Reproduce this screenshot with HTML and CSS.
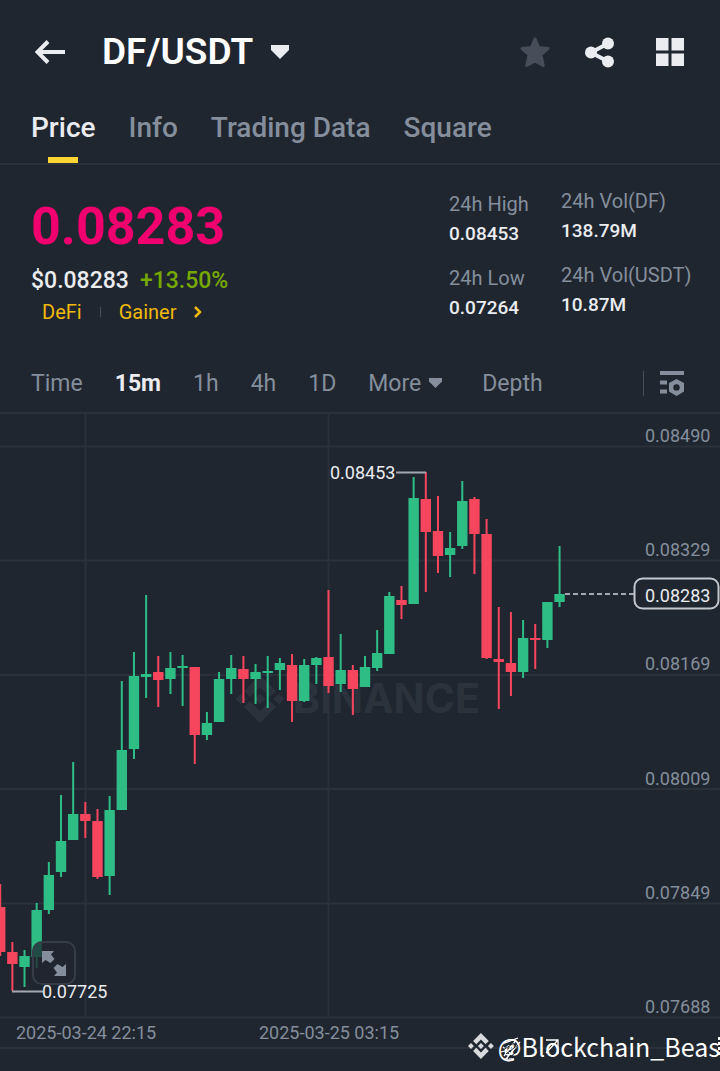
FILE: index.html
```
<!DOCTYPE html>
<html lang="en">

<head>
    <meta charset="UTF-8">
    <meta name="viewport" content="width=device-width, initial-scale=1.0">
    <title>DF/USDT</title>
    <link rel="stylesheet" href="styles.css">
</head>

<body>
    <header class="topbar">
        <button class="icon-btn" aria-label="Back">
            <svg width="30" height="24" viewBox="0 0 30 24"><path d="M13 1.5L2.5 12L13 22.5M3 12H30" fill="none" stroke="#eaecef" stroke-width="4"/></svg>
        </button>
        <button class="pair">
            DF/USDT
            <svg width="18" height="14" viewBox="0 0 18 14"><path d="M0 0H18V5L9 14L0 5Z" fill="#eaecef"/></svg>
        </button>
        <div class="actions">
            <button class="icon-btn" aria-label="Favorite">
                <svg width="30" height="31" viewBox="0 0 30 31"><path d="M15 2L18.7 10.6L28 11.5L21 17.8L23.2 28.5L15 24L6.8 28.5L9 17.8L2 11.5L11.3 10.6Z" fill="#474d59" stroke="#474d59" stroke-width="3" stroke-linejoin="round"/></svg>
            </button>
            <button class="icon-btn" aria-label="Share">
                <svg width="30" height="31" viewBox="0 0 30 31"><path d="M23 6.5L6 15.5L23 24.5" fill="none" stroke="#eaecef" stroke-width="4"/><g fill="#eaecef"><circle cx="23" cy="6.5" r="6"/><circle cx="6" cy="15.5" r="6"/><circle cx="23" cy="24.5" r="6"/></g></svg>
            </button>
            <button class="icon-btn" aria-label="Menu">
                <svg width="34" height="28" viewBox="-6 0 34 28"><path d="M0 0H12.5V12.5H0ZM15.5 0H28V12.5H15.5ZM0 15.5H12.5V28H0ZM15.5 15.5H28V28H15.5Z" fill="#eaecef"/></svg>
            </button>
        </div>
    </header>

    <nav class="tabs">
        <a class="tab active" href="#">Price</a>
        <a class="tab" href="#">Info</a>
        <a class="tab" href="#">Trading Data</a>
        <a class="tab" href="#">Square</a>
    </nav>

    <section class="summary">
        <div class="quote">
            <div class="last-price">0.08283</div>
            <div class="fiat"><span>$0.08283</span><span class="change">+13.50%</span></div>
            <div class="tags">
                <a href="#">DeFi</a>
                <i class="tag-line"></i>
                <a href="#">Gainer
                    <svg width="8" height="12" viewBox="0 0 8 12"><path d="M1 1L6 6L1 11" fill="none" stroke="#f0b90b" stroke-width="2.5"/></svg>
                </a>
            </div>
        </div>
        <dl class="stats">
            <dt>24h High</dt>
            <dd>0.08453</dd>
            <dt>24h Low</dt>
            <dd>0.07264</dd>
        </dl>
        <dl class="stats volume">
            <dt>24h Vol(DF)</dt>
            <dd>138.79M</dd>
            <dt>24h Vol(USDT)</dt>
            <dd>10.87M</dd>
        </dl>
    </section>

    <div class="intervals">
        <button>Time</button>
        <button class="active">15m</button>
        <button>1h</button>
        <button>4h</button>
        <button>1D</button>
        <button class="more">More <svg width="13" height="10" viewBox="0 0 13 10"><path d="M0 0H13V3.5L6.5 10L0 3.5Z" fill="#848e9c"/></svg></button>
        <button>Depth</button>
        <button class="settings" aria-label="Chart settings">
            <svg width="24" height="25" viewBox="0 0 24 25"><path d="M0 0H24V4H0ZM0 9.5H7V13.5H0ZM0 18.5H7V22.5H0Z" fill="#848e9c"/><path fill-rule="evenodd" d="M16.5 8L24 12V20.5L16.5 25L9 20.5V12ZM16.5 13.2A3.2 3.2 0 1 0 16.5 19.6A3.2 3.2 0 1 0 16.5 13.2Z" fill="#848e9c"/></svg>
        </button>
    </div>

    <main class="chart">
        <svg class="plot" viewBox="0 0 720 659">
            <path class="grid" d="M0 34.5H720M0 148.5H720M0 263H720M0 377H720M0 491.5H720M0 605.5H720M0 636H720M85.5 0V605M328.5 0V605"/>

            <!-- watermark -->
            <g class="mark">
                <path d="M260 263L276 279L270 285L260 275L250 285L244 279ZM260 311L276 295L270 289L260 299L250 289L244 295ZM260 281.5L265.5 287L260 292.5L254.5 287ZM241 281.5L246.5 287L241 292.5L235.5 287ZM279 281.5L284.5 287L279 292.5L273.5 287Z"/>
                <text x="293" y="301">BINANCE</text>
            </g>

            <g id="candles"></g>

            <path class="leader" d="M396 60.5H426M12 579.5H43"/>
            <path class="leader" stroke-dasharray="5 3" d="M565 182H634"/>
            <rect class="price-tag" x="634.5" y="166.5" width="84" height="30" rx="8"/>

            <g class="axis">
                <text x="645" y="30">0.08490</text>
                <text x="645" y="144">0.08329</text>
                <text x="645" y="258">0.08169</text>
                <text x="645" y="373">0.08009</text>
                <text x="645" y="487">0.07849</text>
                <text x="645" y="601">0.07688</text>
                <text x="16" y="627">2025-03-24 22:15</text>
                <text x="259" y="627">2025-03-25 03:15</text>
            </g>
            <g class="axis bright">
                <text x="330" y="67">0.08453</text>
                <text x="42" y="586">0.07725</text>
                <text x="645" y="190">0.08283</text>
            </g>
        </svg>

        <button class="expand" aria-label="Full screen">
            <svg width="24" height="25" viewBox="0 0 24 25"><path d="M0 0H12L9 3.5L12.5 8L8.5 12L3.5 9L0 12ZM24 25H12L15 21.5L11.500 17L15.500 13L20.500 16L24 13Z" fill="#848e9c"/></svg>
        </button>

        <div class="credit">
            <svg width="28" height="28" viewBox="0 0 28 28"><path d="M14 0L22.5 8.5L19 12L14 7L9 12L5.5 8.5ZM14 28L22.5 19.5L19 16L14 21L9 16L5.5 19.5ZM14 10.8L17.2 14L14 17.2L10.8 14ZM3.2 10.8L6.4 14L3.2 17.2L0 14ZM24.8 10.8L28 14L24.8 17.2L21.6 14Z" fill="#d9dadc"/></svg>
            <span>@Blockchain_Beas</span>
            <!-- scratches over the handle -->
            <svg class="scratches" width="252" height="36" viewBox="0 0 252 36"><path d="M34 16L50 10M36 28L48 12M33 24L47 20M38 31L52 14M35 19L44 27M36 31H46M78 12H90V26M78 25L90 12" fill="none" stroke="#fff" stroke-width="1.300"/><path d="M35 22L46 15M38 26L50 17M40 31L47 25" fill="none" stroke="#202630" stroke-width="1"/><path d="M251 9V29" fill="none" stroke="#fff" stroke-width="2" stroke-dasharray="3 2"/></svg>
        </div>
    </main>

    <script type="text/javascript">
        // direction, high, body top, body bottom, low
        var candles = [
            ["down", 884, 907, 952, 956], ["down", 942, 952, 964, 991], ["up", 950, 956, 967, 987],
            ["up", 903, 910, 957, 968], ["up", 862, 875, 910, 914], ["up", 795, 841, 872, 877],
            ["up", 762, 814, 840, 840], ["down", 802, 814, 821, 838], ["down", 809, 821, 877, 879],
            ["up", 796, 810, 876, 895], ["up", 681, 750, 810, 810], ["up", 652, 676, 749, 759],
            ["up", 595, 674, 677, 698], ["down", 656, 672, 680, 707], ["up", 652, 668, 679, 694],
            ["up", 655, 666, 668, 706], ["down", 667, 667, 735, 764], ["up", 712, 723, 735, 740],
            ["up", 672, 679, 722, 722], ["up", 655, 668, 679, 694], ["down", 656, 669, 679, 703],
            ["up", 664, 672, 679, 704], ["up", 656, 671, 673, 708], ["up", 658, 663, 670, 690],
            ["down", 654, 665, 701, 722], ["up", 659, 665, 701, 702], ["up", 657, 658, 665, 684],
            ["down", 590, 657, 686, 693], ["up", 634, 670, 684, 692], ["down", 665, 670, 689, 715],
            ["up", 656, 667, 687, 687], ["up", 630, 653, 668, 671], ["up", 592, 596, 654, 654],
            ["down", 586, 600, 605, 619], ["up", 477, 498, 604, 604], ["down", 472, 499, 532, 592],
            ["down", 496, 531, 556, 573], ["up", 532, 548, 555, 577], ["up", 481, 501, 546, 549],
            ["down", 497, 499, 534, 574], ["down", 519, 534, 658, 659], ["down", 607, 659, 662, 709],
            ["down", 612, 663, 672, 696], ["up", 620, 638, 672, 678], ["down", 624, 638, 640, 669],
            ["up", 602, 602, 640, 648], ["up", 546, 594, 602, 607]
        ];
        var top0 = 412;
        var step = 12.16;

        function addRect(group, cls, x, y, width, height) {
            var rect = document.createElementNS("http://www.w3.org/2000/svg", "rect");
            rect.setAttribute("class", cls);
            rect.setAttribute("x", x);
            rect.setAttribute("y", y);
            rect.setAttribute("width", width);
            rect.setAttribute("height", height);
            group.appendChild(rect);
        }

        var group = document.getElementById("candles");
        for (var i = 0; i < candles.length; i++) {
            var c = candles[i];
            var x = 0.2 + i * step;
            addRect(group, c[0], x - 1, c[1] - top0, 2, c[4] - c[1]);
            addRect(group, c[0], x - 5.2, c[2] - top0, 10.4, c[3] - c[2]);
        }
    </script>
</body>

</html>
```
FILE: styles.css
```
* {
    box-sizing: border-box;
}

body {
    margin: 0;
    background-color: #202630;
    color: #eaecef;
    font-family: Roboto, "Liberation Sans", sans-serif;
    overflow-x: hidden;
}

button {
    border: 0;
    padding: 0;
    background: none;
    color: inherit;
    font: inherit;
}

a {
    color: inherit;
    text-decoration: none;
}

svg {
    display: block;
}

.topbar {
    display: flex;
    align-items: center;
    height: 104px;
    padding: 0 36px 0 35px;
}

.pair {
    display: flex;
    align-items: center;
    gap: 18px;
    margin-left: 37px;
    color: #fff;
    font-size: 37px;
    font-weight: 600;
    line-height: 44px;
}

.actions {
    display: flex;
    align-items: center;
    gap: 35px;
    margin-left: auto;
}

.tabs {
    display: flex;
    gap: 33px;
    height: 61px;
    padding: 0 31px;
    border-bottom: 2px solid #2b313b;
    color: #848e9c;
    font-size: 28px;
    font-weight: 500;
    line-height: 48px;
}

.tab.active {
    position: relative;
    color: #eaecef;
}

.tab.active::after {
    content: "";
    position: absolute;
    left: calc(50% - 15px);
    bottom: 0;
    width: 30px;
    height: 6px;
    background-color: #fcd535;
}

.summary {
    display: flex;
    height: 189px;
    padding: 24px 31px 0;
}

.quote {
    flex: 1;
}

.last-price {
    color: #f0006f;
    font-size: 52px;
    font-weight: 700;
    line-height: 76px;
}

.fiat {
    display: flex;
    gap: 11px;
    font-size: 23px;
    font-weight: 500;
    line-height: 32px;
}

.change {
    color: #76a900;
}

.tags {
    display: flex;
    align-items: center;
    gap: 18px;
    padding-left: 11px;
    color: #f0b90b;
    font-size: 20px;
    line-height: 30px;
}

.tags a {
    display: flex;
    align-items: center;
    gap: 18px;
}

.tag-line {
    width: 1px;
    height: 10px;
    background-color: #474d59;
}

.stats {
    width: 112px;
    margin: 0;
    font-size: 20px;
    line-height: 30px;
    white-space: nowrap;
}

.stats.volume {
    width: 128px;
    margin-top: -3px;
}

.stats dt {
    color: #848e9c;
}

.stats dd {
    margin: 0 0 14px;
    font-size: 19px;
    font-weight: 500;
}

.intervals {
    display: flex;
    align-items: center;
    gap: 32px;
    height: 58px;
    padding: 0 36px 0 31px;
    color: #848e9c;
    font-size: 23px;
}

.intervals .active {
    color: #eaecef;
    font-weight: 700;
}

.more {
    display: flex;
    align-items: center;
    gap: 8px;
    margin-right: 8px;
}

.settings {
    margin-left: auto;
    padding-left: 16px;
    border-left: 1px solid #474d59;
}

.chart {
    position: relative;
    overflow: hidden;
    box-shadow: inset 0 2px #2b313b;
}

.plot {
    width: 100%;
}

.grid {
    fill: none;
    stroke: #2b313b;
    stroke-width: 2;
}

.mark {
    fill: #2c323c;
    font-family: Inter, sans-serif;
    font-size: 41px;
    font-weight: 700;
}

.up {
    fill: #2ebd85;
}

.down {
    fill: #f6465d;
}

.leader {
    fill: none;
    stroke: #a3a8b0;
    stroke-width: 2;
}

.price-tag {
    fill: #202630;
    stroke: #c4c8ce;
    stroke-width: 2;
}

.axis {
    fill: #848e9c;
    font-size: 18px;
}

.bright {
    fill: #eaecef;
}

.expand {
    position: absolute;
    left: 32px;
    bottom: 86px;
    display: flex;
    align-items: center;
    justify-content: center;
    width: 44px;
    height: 44px;
    border: 2px solid #373d48;
    border-radius: 10px;
    background-color: rgba(32, 38, 48, 0.75);
}

.credit {
    position: absolute;
    right: 0;
    bottom: 7px;
    display: flex;
    align-items: center;
    gap: 4px;
    width: 252px;
    color: #fff;
    font-family: "Noto Sans CJK SC", sans-serif;
    font-size: 25px;
    line-height: 36px;
    white-space: nowrap;
}

.scratches {
    position: absolute;
    left: 0;
    top: 0;
}
```
